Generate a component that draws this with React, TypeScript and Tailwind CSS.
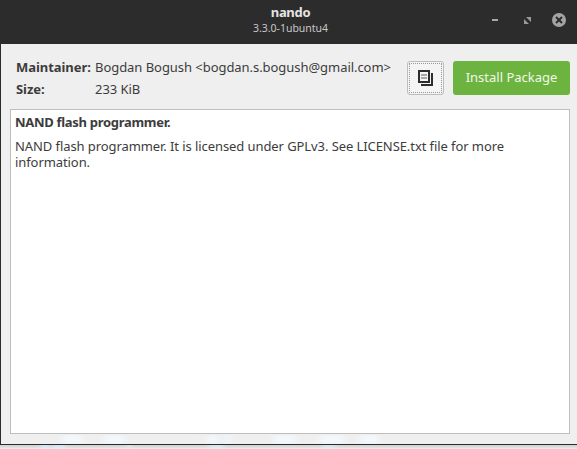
import React from 'react';

const font = "font-['Noto_Sans',sans-serif]";

const glints = [
  'left-[60px] w-[22px]',
  'left-[102px] w-[22px]',
  'left-[206px] w-[12px]',
  'left-[224px] w-[6px]',
  'left-[272px] w-[24px]',
  'left-[318px] w-[26px]',
  'left-[358px] w-[20px]',
];

const spots = [
  'left-[40px] w-[10px]',
  'left-[52px] w-[14px]',
  'left-[126px] w-[6px]',
  'left-[208px] w-[16px]',
  'left-[322px] w-[14px]',
];

const WindowButtons = () => (
  <div className="absolute right-[11px] top-[13px] flex items-center">
    <div className="h-[2px] w-[6px] bg-[#a8a8a8]" />
    <svg width="7" height="7" viewBox="0 0 7 7" className="ml-[26px]">
      <path d="M0 2 5 7H0ZM7 0V5L2 0Z" fill="#999999" />
    </svg>
    <div className="ml-[21px] flex h-[14px] w-[14px] items-center justify-center rounded-full bg-[#a4a4a4]">
      <svg width="8" height="8" viewBox="0 0 8 8">
        <path d="M1 1 7 7M7 1 1 7" stroke="#2c2c2c" strokeWidth="2" />
      </svg>
    </div>
  </div>
);

export default function App() {
  return (
    <div className={`${font} relative flex h-[449px] w-[577px] flex-col overflow-hidden bg-[#e4e4e4]`}>
      <div className="relative flex h-[44px] shrink-0 flex-col items-center bg-[#2c2c2c] pl-[4px] pt-[4px] text-white">
        <div className="text-[13px] font-bold leading-[17px] tracking-[-0.3px] text-[#e4e4e4]">nando</div>
        <div className="text-[10.5px] leading-[14px] text-[#c8c8c8]">3.3.0-1ubuntu4</div>
        <WindowButtons />
      </div>

      <div className="relative flex h-[401px] shrink-0 flex-col border-b border-l border-[#2c2c2c] bg-[#efefef] pb-[10px] pl-[9px] pr-[7px]">
        <div className="flex h-[65px] shrink-0 items-center pt-[3px]">
          <div className="ml-[6px] grid grid-cols-[79px_1fr] gap-y-[4px] text-[13px] leading-[18px] tracking-[-0.05px] text-[#3c3c3c]">
            <span className="font-bold">Maintainer:</span>
            <span>Bogdan Bogush &lt;bogdan.s.bogush@gmail.com&gt;</span>
            <span className="font-bold">Size:</span>
            <span>233 KiB</span>
          </div>
          <div className="ml-auto flex items-center gap-[9px]">
            <button className="flex h-[34px] w-[37px] items-center justify-center rounded-[3px] border border-[#bdbdbd] bg-[#f4f4f4] outline-1 -outline-offset-3 outline-dotted outline-[#9a9a9a]">
              <svg width="15" height="16" viewBox="0 0 15 16">
                <path d="M3 14h10V3h2v13H3z" fill="#2c2c2c" />
                <rect x="1" y="1" width="10" height="11" fill="none" stroke="#2c2c2c" strokeWidth="2" />
                <path d="M3 4h6v2H3zM3 7h6v2H3z" fill="#a8a8a8" />
              </svg>
            </button>
            <button className="h-[34px] w-[117px] rounded-[3px] bg-[#6db33f] text-[13px] text-[#f2f7ec]">
              Install Package
            </button>
          </div>
        </div>
        <div className="min-h-0 flex-1 border border-[#bebebe] bg-white px-[4px] pt-[4px] text-[13px] leading-[16px] tracking-[-0.08px] text-[#3c3c3c]">
          <p className="font-bold tracking-[-0.3px]">NAND flash programmer.</p>
          <p className="mt-[8px]">
            NAND flash programmer. It is licensed under GPLv3. See LICENSE.txt file for more information.
          </p>
        </div>
        <div className="absolute bottom-0 left-0 right-0 h-[9px] overflow-hidden">
          {glints.map((g) => (
            <div key={g} className={`absolute top-0 h-[9px] rounded-full bg-[#f2f9ff] blur-[3px] ${g}`} />
          ))}
        </div>
      </div>

      <div className="relative min-h-0 flex-1 overflow-hidden bg-gradient-to-b from-[#cfcfcf] to-[#ececec]">
        {spots.map((s) => (
          <div key={s} className={`absolute top-0 h-[4px] rounded-full bg-[#dcefff] blur-[2px] ${s}`} />
        ))}
      </div>
    </div>
  );
}
